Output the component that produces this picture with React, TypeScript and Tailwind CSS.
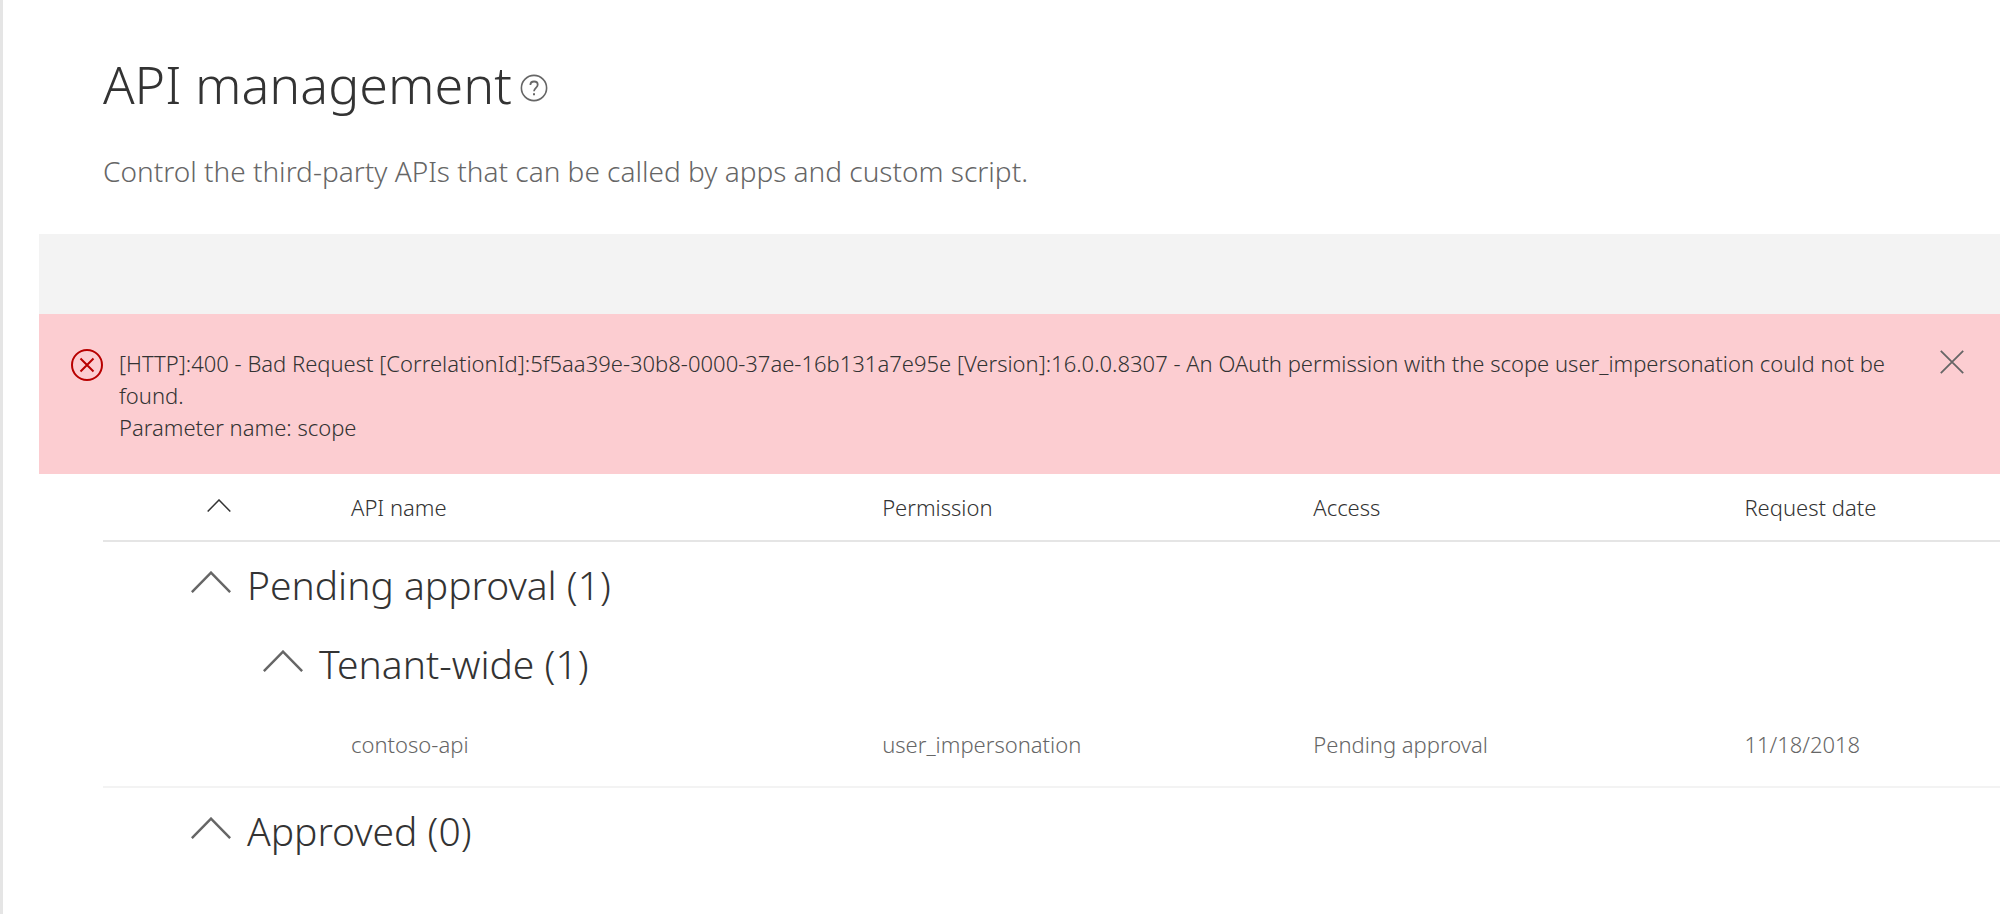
import type { ReactNode } from "react";

const Chevron = ({ className }: { className: string }) => (
    <svg viewBox="0 0 38 21" fill="none" stroke="currentColor" className={className} aria-hidden="true">
        <path d="M0.7 20.2 19 1.6 37.3 20.2" strokeWidth="2.4" />
    </svg>
)

const GroupRow = ({ indent, children }: { indent: string; children: ReactNode }) => (
    <tr className="h-20">
        <th colSpan={5} scope="rowgroup" className={`${indent} py-0 text-left align-middle font-light`}>
            <button type="button" className="flex items-center gap-4 text-[39px] leading-[56px] text-[#333333] whitespace-nowrap">
                <Chevron className="w-10 h-[22px] text-[#666666] shrink-0" />
                <span className="pt-1.5">{children}</span>
            </button>
        </th>
    </tr>
)

const columns = ["API name", "Permission", "Access", "Request date"];
const request = ["contoso-api", "user_impersonation", "Pending approval", "11/18/2018"];

const App = () => {
    return (
        <div className="min-h-screen w-full bg-white border-l-3 border-[#e5e5e5] pl-9 font-['Noto_Sans',sans-serif] font-light">
            <header className="pl-16 pt-[46px] pb-[42px]">
                <div className="flex flex-row items-center gap-2">
                    <h1 className="text-[52px] leading-[76px] font-light text-[#333333]">API management</h1>
                    <button type="button" aria-label="Help" className="mt-2 text-[#666666]">
                        <svg viewBox="0 0 28 28" fill="none" stroke="currentColor" className="size-7">
                            <circle cx="14" cy="14" r="12.6" strokeWidth="1.6" />
                            <path d="M10.4 11c0-2.1 1.5-3.5 3.7-3.5s3.6 1.3 3.6 3.2c0 3-3.7 3.3-3.7 6.6" strokeWidth="1.8" />
                            <path d="M14 19.2v2" strokeWidth="2" />
                        </svg>
                    </button>
                </div>
                <p className="mt-7 text-[28px] leading-[42px] text-[#666666]">
                    Control the third-party APIs that can be called by apps and custom script.
                </p>
            </header>

            <div className="h-20 bg-[#f3f3f3]" />

            <div role="alert" className="flex flex-row items-start bg-[#fccdd1] pl-8 pr-9 pt-[33px] pb-[31px] text-[22px] leading-8 text-[#333333]">
                <svg viewBox="0 0 32 32" fill="none" stroke="#b80000" className="size-8 mt-0.5 mr-4 shrink-0" aria-hidden="true">
                    <circle cx="16" cy="16" r="15" strokeWidth="2" />
                    <path d="M9.5 9.5l13 13M22.5 9.5l-13 13" strokeWidth="2" />
                </svg>
                <p className="grow">
                    [HTTP]:400 - Bad Request [CorrelationId]:5f5aa39e-30b8-0000-37ae-16b131a7e95e [Version]:16.0.0.8307 - An OAuth permission with the scope user_impersonation could not be found.
                    <br />
                    Parameter name: scope
                </p>
                <button type="button" aria-label="Dismiss" className="ml-9 mt-[3px] shrink-0 text-[#666666]">
                    <svg viewBox="0 0 24 24" fill="none" stroke="currentColor" className="size-6">
                        <path d="M0.8 0.8l22.4 22.4M23.2 0.8l-22.4 22.4" strokeWidth="1.8" />
                    </svg>
                </button>
            </div>

            <div className="pl-16">
                <table className="w-full table-fixed border-collapse text-[22px] leading-8">
                    <colgroup>
                        <col className="w-62" />
                        <col className="w-7/25" />
                        <col className="w-5/22" />
                        <col className="w-5/22" />
                        <col />
                    </colgroup>
                    <thead>
                        <tr className="h-[67px] border-b-2 border-[#e5e5e5] text-left text-[#333333]">
                            <th scope="col" className="pl-26 pb-1">
                                <button type="button" aria-label="Sort" className="block">
                                    <Chevron className="w-6 h-[13px] text-[#333333]" />
                                </button>
                            </th>
                            {columns.map((name) => (
                                <th key={name} scope="col" className="font-light whitespace-nowrap">{name}</th>
                            ))}
                        </tr>
                    </thead>
                    <tbody>
                        <GroupRow indent="pl-22">Pending approval (1)</GroupRow>
                        <GroupRow indent="pl-40">Tenant-wide (1)</GroupRow>
                        <tr className="h-[86px] border-b-2 border-[#f3f3f3] text-[#666666]">
                            <td />
                            {request.map((value) => (
                                <td key={value} className="whitespace-nowrap">{value}</td>
                            ))}
                        </tr>
                        <GroupRow indent="pl-22">Approved (0)</GroupRow>
                    </tbody>
                </table>
            </div>
        </div>
    )
}

export default App;
